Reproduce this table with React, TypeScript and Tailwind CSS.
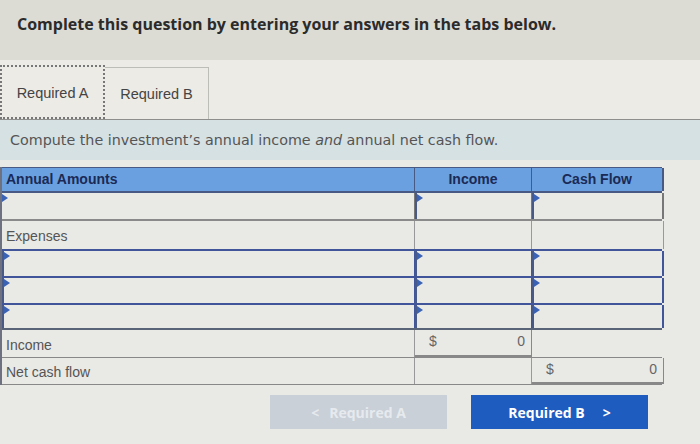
import React from "react";

const COLS = "grid grid-cols-[413px_117px_132px]";

function Flag() {
  return (
    <span className="absolute left-0 top-[1px] h-0 w-0 border-y-[4px] border-l-[6px] border-y-transparent border-l-[#3a63b5]" />
  );
}

function InputCell() {
  return (
    <div className="relative h-full border-l-2 border-[#4a5a86]">
      <Flag />
    </div>
  );
}

function InputRow({ last = false }: { last?: boolean }) {
  return (
    <div
      className={`${COLS} h-[27px] border-t-2 border-[#41569a] ${last ? "border-b-2 border-b-[#5a6478]" : ""}`}
    >
      <div className="border-r border-[#41569a]">
        <InputCell />
      </div>
      <div className="border-r border-[#41569a]">
        <InputCell />
      </div>
      <div className="border-r-2 border-[#41569a]">
        <InputCell />
      </div>
    </div>
  );
}

function Amount({ value }: { value: string }) {
  return (
    <div className="flex h-full items-center justify-between pb-[2px] pl-[14px] pr-[6px] text-[#666]">
      <span>$</span>
      <span>{value}</span>
    </div>
  );
}

export default function App() {
  return (
    <div className="h-[444px] w-[700px] overflow-hidden bg-[#e9e9e5] font-['Liberation_Sans',Arial,sans-serif]">
      <div className="h-[60px] bg-[#dcdcd5] pl-[17px] pt-[13px]">
        <h1 className="font-['Open_Sans',sans-serif] text-[16px] leading-[22px] font-bold text-[#2b2b2b]">
          Complete this question by entering your answers in the tabs below.
        </h1>
      </div>

      <div className="flex h-[60px] items-end border-b border-[#8e8f8c] bg-[#ecebe5]">
        <div className="flex h-[54px] w-[105px] items-center justify-center border-2 border-dotted border-[#777] pt-[3px] text-[14.5px] text-[#444]">
          Required A
        </div>
        <div className="flex h-[52px] w-[104px] items-center justify-center border border-l-0 border-b-0 border-[#bdbdb8] pt-[3px] text-[14.5px] text-[#444]">
          Required B
        </div>
      </div>

      <div className="flex h-[40px] items-center bg-[#d6e1e4] pl-[10px] pt-[1px]">
        <p className="font-['DejaVu_Sans',sans-serif] text-[14.3px] text-[#555]">
          Compute the investment’s annual income <i>and</i> annual net cash
          flow.
        </p>
      </div>

      <div className="pt-[7px]">
        <div className="w-[662px] border-l-2 border-[#6e7280] text-[14px] text-[#555]">
          <div
            className={`${COLS} h-[26px] border-t border-b-2 border-[#485a84] bg-[#6aa0df] font-bold text-[#1b2a55]`}
          >
            <div className="flex items-center border-r border-[#485a84] pl-[4px]">
              Annual Amounts
            </div>
            <div className="flex items-center justify-center border-r border-[#485a84]">
              Income
            </div>
            <div className="flex items-center justify-center border-r-2 border-[#485a84]">
              Cash Flow
            </div>
          </div>

          <div className={`${COLS} h-[28px] border-b-2 border-[#8a8a8a]`}>
            <div className="relative border-r border-[#777]">
              <Flag />
            </div>
            <div className="relative border-r border-[#777]">
              <InputCell />
            </div>
            <div className="relative border-r-2 border-[#777]">
              <InputCell />
            </div>
          </div>

          <div className={`${COLS} h-[28px]`}>
            <div className="flex items-center border-r border-[#999] pl-[4px] pt-[3px]">
              Expenses
            </div>
            <div className="border-r border-[#999]" />
            <div className="border-r border-[#999]" />
          </div>

          <InputRow />
          <InputRow />
          <InputRow last />

          <div className={`${COLS} h-[28px] border-b border-[#888]`}>
            <div className="flex items-center border-r border-[#999] pl-[4px] pt-[3px]">
              Income
            </div>
            <div className="border-r border-b-2 border-[#888]">
              <Amount value="0" />
            </div>
            <div />
          </div>

          <div className={`${COLS} h-[27px] border-b border-[#888]`}>
            <div className="flex items-center border-r border-[#999] pl-[4px] pt-[2px]">
              Net cash flow
            </div>
            <div className="border-r border-[#999]" />
            <div className="border-r border-b-2 border-[#888]">
              <Amount value="0" />
            </div>
          </div>
        </div>

        <div className="mt-[10px] flex gap-[24px] pl-[270px]">
          <button className="flex h-[34px] w-[177px] items-center justify-center gap-[10px] bg-[#c9d0d8] font-['Open_Sans',sans-serif] text-[14px] font-bold text-[#e6eaee]">
            <span>&lt;</span>
            <span>Required A</span>
          </button>
          <button className="flex h-[34px] w-[177px] items-center justify-center gap-[18px] bg-[#1f5cc0] font-['Open_Sans',sans-serif] text-[14px] font-bold text-white">
            <span>Required B</span>
            <span>&gt;</span>
          </button>
        </div>
      </div>
    </div>
  );
}
